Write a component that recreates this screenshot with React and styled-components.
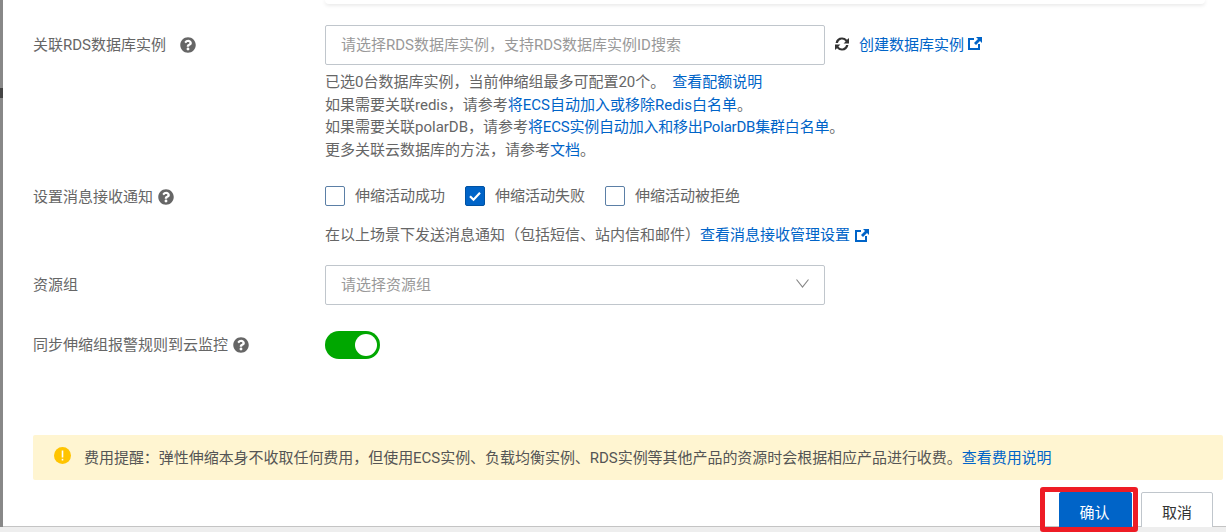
import styled, { createGlobalStyle } from "styled-components";
import { FaQuestionCircle } from "react-icons/fa";

const GlobalStyle = createGlobalStyle`
  html, body {
    margin: 0;
    padding: 0;
    background: #fff;
  }
  body {
    font-family: Roboto, "Noto Sans CJK SC", sans-serif;
    font-size: 15px;
    color: #666;
  }
`;

const Page = styled.div`
  position: relative;
  display: flex;
  flex-direction: column;
  width: 1226px;
  height: 532px;
  overflow: hidden;
`;

const Main = styled.div`
  flex: 1;
  display: flex;
  min-height: 0;
`;

const Backdrop = styled.div`
  width: 3px;
  background: linear-gradient(#888 88px, #444 88px, #444 98px, #888 98px);
`;

const Panel = styled.div`
  flex: 1;
  display: flex;
  flex-direction: column;
  min-width: 0;
  padding: 0 3px 0 30px;
  background: #fff;
  border-bottom: 1px solid #c4c4c4;
`;

const TopCard = styled.div`
  height: 4px;
  margin: 0 18px 0 292px;
  background: #fff;
  border-radius: 0 0 4px 4px;
  box-shadow: 0 1px 4px rgba(0, 0, 0, 0.12);
`;

const Row = styled.div`
  display: grid;
  grid-template-columns: 292px 1fr;
  margin-top: ${(p) => p.$top}px;
`;

const Label = styled.div`
  display: flex;
  align-items: center;
  gap: ${(p) => p.$gap || 5}px;
  height: ${(p) => p.$height || 40}px;
  line-height: 20px;
`;

const Help = styled(FaQuestionCircle)`
  width: 16px;
  height: 16px;
  color: #666;
`;

const InputLine = styled.div`
  display: flex;
  align-items: center;
`;

const Field = styled.div`
  display: flex;
  align-items: center;
  justify-content: space-between;
  box-sizing: border-box;
  width: 500px;
  height: 40px;
  padding: 0 15px 3px;
  background: #fff;
  border: 1px solid #c0c6cc;
  border-radius: 2px;
  color: #999;
`;

const Link = styled.a`
  color: #0064c8;
  text-decoration: none;
`;

const CreateLink = styled(Link)`
  display: flex;
  align-items: center;
  gap: 4px;
  margin: -3px 0 0 9px;
`;

const RefreshIcon = styled.svg`
  width: 16px;
  height: 16px;
  margin: -2px 0 0 9px;
  fill: #333;
`;

const ExternalIcon = styled.svg`
  width: 14px;
  height: 13px;
  margin-left: ${(p) => p.$left || 0}px;
  fill: #0064c8;
`;

const Chevron = styled.svg`
  width: 13px;
  height: 9px;
  fill: none;
  stroke: #888;
  stroke-width: 1.2;
`;

const Notes = styled.div`
  margin-top: 6px;
  line-height: 22.5px;
`;

const NoteLine = styled.div`
  white-space: nowrap;
`;

const QuotaLink = styled(Link)`
  margin-left: 7px;
`;

const TightLink = styled(Link)`
  letter-spacing: -0.2px;
`;

const Checks = styled.div`
  display: flex;
  align-items: center;
  height: 20px;
`;

const CheckItem = styled.label`
  display: flex;
  align-items: center;
  gap: 10px;
  margin-right: 20px;
`;

const CheckText = styled.span`
  margin-top: -3px;
`;

const CheckBox = styled.span`
  display: flex;
  align-items: center;
  justify-content: center;
  box-sizing: border-box;
  width: 20px;
  height: 20px;
  border: 1px solid ${(p) => (p.$checked ? "#0052a3" : "#5b7fa6")};
  border-radius: 2px;
  background: ${(p) => (p.$checked ? "#0064c8" : "#fff")};
`;

const CheckMark = styled.svg`
  width: 14px;
  height: 14px;
  fill: none;
  stroke: #fff;
  stroke-width: 2.2;
`;

const SceneNote = styled.div`
  display: flex;
  align-items: center;
  margin-top: 19px;
  line-height: 20px;
`;

const Toggle = styled.div`
  display: flex;
  align-items: center;
  justify-content: flex-end;
  box-sizing: border-box;
  width: 55px;
  height: 28px;
  padding-right: 3px;
  border-radius: 14px;
  background: #00a700;
`;

const Knob = styled.div`
  width: 22px;
  height: 22px;
  border-radius: 50%;
  background: #fff;
`;

const Alert = styled.div`
  display: flex;
  align-items: center;
  gap: 13px;
  height: 45px;
  margin-top: auto;
  padding: 0 0 2px 21px;
  box-sizing: border-box;
  background: #fff5d1;
  border-radius: 2px;
  color: #555;
`;

const AlertIcon = styled.svg`
  width: 17px;
  height: 17px;
  margin-top: -3px;
`;

const AlertText = styled.span`
  letter-spacing: -0.04px;
`;

const Footer = styled.div`
  display: flex;
  justify-content: flex-end;
  gap: 9px;
  height: 34px;
  margin-top: 12px;
  padding-right: 10px;
`;

const Button = styled.button`
  box-sizing: border-box;
  width: ${(p) => p.$width}px;
  height: 40px;
  border: 1px solid ${(p) => (p.$primary ? "#0064c8" : "#c0c6cc")};
  border-radius: 2px;
  background: ${(p) => (p.$primary ? "#0064c8" : "#fff")};
  color: ${(p) => (p.$primary ? "#fff" : "#333")};
  font: inherit;
  padding: 0 ${(p) => (p.$primary ? 2 : 0)}px 2px 0;
`;

const BottomBar = styled.div`
  height: 5px;
  background: #eee;
`;

const Highlight = styled.div`
  position: absolute;
  left: 1040px;
  top: 487px;
  box-sizing: border-box;
  width: 98px;
  height: 45px;
  border: 5px solid #ee1c25;
  border-radius: 3px;
  pointer-events: none;
`;

function External({ left }) {
  return (
    <ExternalIcon viewBox="0 0 14 13" $left={left}>
      <path d="M0 1h6v2H2v8h8V7h2v6H0z" />
      <path d="M8 0h6v6l-2-2-4 4-2-2 4-4z" />
    </ExternalIcon>
  );
}

export default function App() {
  return (
    <Page>
      <GlobalStyle />
      <Main>
        <Backdrop />
        <Panel>
          <TopCard />
          <Row $top={21}>
            <Label $gap={14}>
              关联RDS数据库实例 <Help />
            </Label>
            <div>
              <InputLine>
                <Field>请选择RDS数据库实例，支持RDS数据库实例ID搜索</Field>
                <RefreshIcon viewBox="0 0 16 16">
                  <path d="M8 1.5a6.5 6.5 0 0 1 5 2.3L15 2v5.5H9.6l2-2A4.2 4.2 0 0 0 3.9 7H1.6A6.5 6.5 0 0 1 8 1.5z" />
                  <path d="M8 14.5a6.5 6.5 0 0 1-5-2.3L1 14V8.5h5.4l-2 2A4.2 4.2 0 0 0 12.100 9h2.300A6.500 6.500 0 0 1 8 14.500z" />
                </RefreshIcon>
                <CreateLink>
                  创建数据库实例
                  <External />
                </CreateLink>
              </InputLine>
              <Notes>
                <NoteLine>
                  已选0台数据库实例，当前伸缩组最多可配置20个。
                  <QuotaLink>查看配额说明</QuotaLink>
                </NoteLine>
                <NoteLine>
                  如果需要关联redis，请参考
                  <Link>将ECS自动加入或移除Redis白名单</Link>。
                </NoteLine>
                <NoteLine>
                  如果需要关联polarDB，请参考
                  <TightLink>将ECS实例自动加入和移出PolarDB集群白名单</TightLink>。
                </NoteLine>
                <NoteLine>
                  更多关联云数据库的方法，请参考<Link>文档</Link>。
                </NoteLine>
              </Notes>
            </div>
          </Row>
          <Row $top={25}>
            <Label $height={22}>
              设置消息接收通知 <Help />
            </Label>
            <div>
              <Checks>
                <CheckItem>
                  <CheckBox />
                  <CheckText>伸缩活动成功</CheckText>
                </CheckItem>
                <CheckItem>
                  <CheckBox $checked>
                    <CheckMark viewBox="0 0 14 14">
                      <path d="M2 7.200l3.500 3.500L12 3.800" />
                    </CheckMark>
                  </CheckBox>
                  <CheckText>伸缩活动失败</CheckText>
                </CheckItem>
                <CheckItem>
                  <CheckBox />
                  <CheckText>伸缩活动被拒绝</CheckText>
                </CheckItem>
              </Checks>
              <SceneNote>
                <span>在以上场景下发送消息通知（包括短信、站内信和邮件）</span>
                <Link>查看消息接收管理设置</Link>
                <External left={5} />
              </SceneNote>
            </div>
          </Row>
          <Row $top={20}>
            <Label>资源组</Label>
            <Field>
              请选择资源组
              <Chevron viewBox="0 0 13 9">
                <path d="M.5.500l6 7.500 6-7.500" />
              </Chevron>
            </Field>
          </Row>
          <Row $top={26}>
            <Label $height={28}>
              同步伸缩组报警规则到云监控 <Help />
            </Label>
            <Toggle>
              <Knob />
            </Toggle>
          </Row>
          <Alert>
            <AlertIcon viewBox="0 0 17 17">
              <circle cx="8.500" cy="8.500" r="8.500" fill="#ffc400" />
              <rect x="7.700" y="3.500" width="1.600" height="7" fill="#fff" />
              <rect x="7.700" y="11.800" width="1.600" height="1.700" fill="#fff" />
            </AlertIcon>
            <AlertText>
              费用提醒：弹性伸缩本身不收取任何费用，但使用ECS实例、负载均衡实例、RDS实例等其他产品的资源时会根据相应产品进行收费。
              <Link>查看费用说明</Link>
            </AlertText>
          </Alert>
          <Footer>
            <Button $primary $width={73}>
              确认
            </Button>
            <Button $width={72}>取消</Button>
          </Footer>
        </Panel>
      </Main>
      <BottomBar />
      <Highlight />
    </Page>
  );
}
